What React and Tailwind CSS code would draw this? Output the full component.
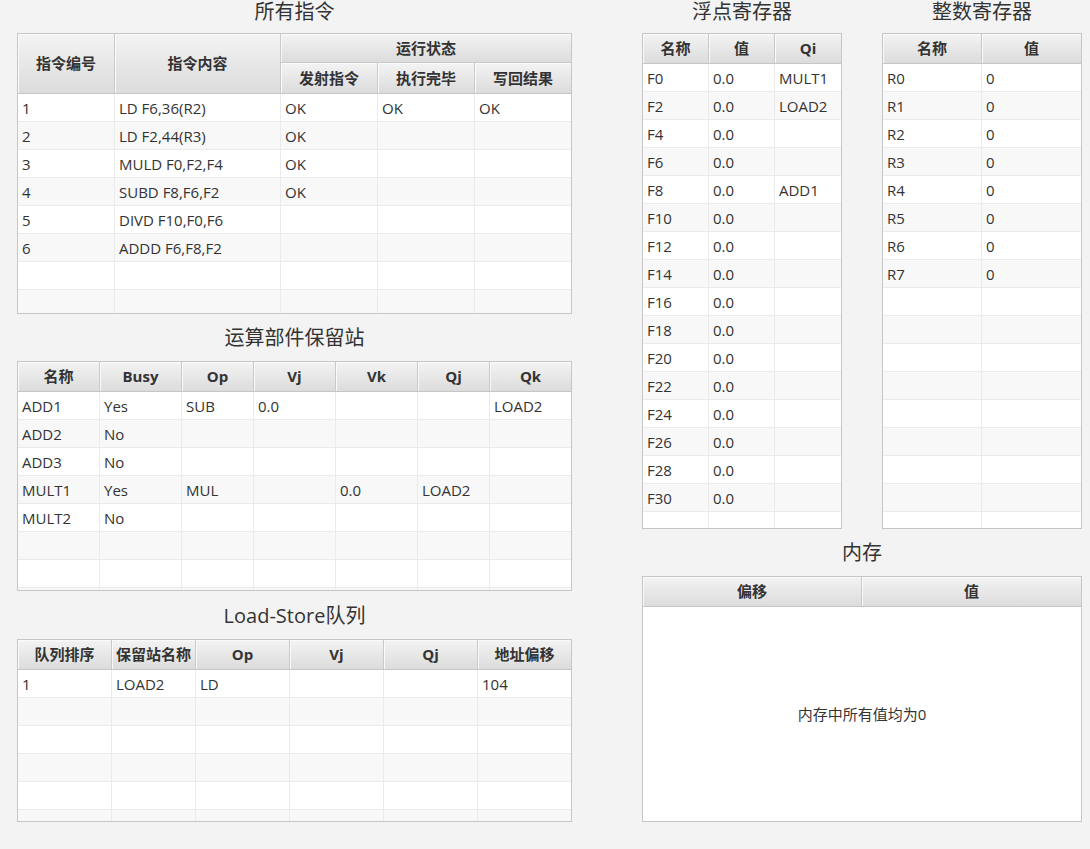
import React from "react";

const font = "font-['Open_Sans','Noto_Sans_CJK_SC',sans-serif]";

const headCell =
  "flex items-center justify-center font-bold text-[15px] text-[#333] bg-gradient-to-b from-[#f3f3f3] to-[#dcdcdc] border-r border-[#c9c9c9] shadow-[inset_1px_1px_0_#fafafa] last:border-r-0";

function Title({ children, className = "" }) {
  return (
    <div className={`flex items-center justify-center text-[20px] text-[#333] ${className}`}>
      {children}
    </div>
  );
}

function Body({ cols, rows, count, height }) {
  const filled = [...rows];
  while (filled.length < count) filled.push([]);
  return (
    <div className={`overflow-hidden bg-white ${height}`}>
      {filled.map((row, i) => (
        <div
          key={i}
          className={`flex h-[28px] border-b border-[#ebebeb] ${i % 2 ? "bg-[#f8f8f8]" : "bg-white"}`}
        >
          {cols.map((c, j) => (
            <div
              key={j}
              className={`${c} flex items-center pl-[4px] pt-[1px] text-[15px] text-[#333] border-r border-[#ebebeb] last:border-r-0 shrink-0`}
            >
              {row[j] || ""}
            </div>
          ))}
        </div>
      ))}
    </div>
  );
}

function SimpleTable({ heads, cols, rows, count, height, width }) {
  return (
    <div className={`border border-[#c6c6c6] bg-white ${width}`}>
      <div className="flex h-[30px] border-b border-[#c6c6c6]">
        {heads.map((h, i) => (
          <div key={h} className={`${cols[i]} ${headCell} shrink-0`}>
            {h}
          </div>
        ))}
      </div>
      <Body cols={cols} rows={rows} count={count} height={height} />
    </div>
  );
}

const instrCols = ["w-[97px]", "w-[166px]", "w-[97px]", "w-[97px]", "w-[96px]"];
const instrRows = [
  ["1", "LD F6,36(R2)", "OK", "OK", "OK"],
  ["2", "LD F2,44(R3)", "OK"],
  ["3", "MULD F0,F2,F4", "OK"],
  ["4", "SUBD F8,F6,F2", "OK"],
  ["5", "DIVD F10,F0,F6"],
  ["6", "ADDD F6,F8,F2"],
];

const rsCols = ["w-[82px]", "w-[82px]", "w-[72px]", "w-[82px]", "w-[82px]", "w-[72px]", "w-[81px]"];
const rsRows = [
  ["ADD1", "Yes", "SUB", "0.0", "", "", "LOAD2"],
  ["ADD2", "No"],
  ["ADD3", "No"],
  ["MULT1", "Yes", "MUL", "", "0.0", "LOAD2"],
  ["MULT2", "No"],
];

const lsCols = ["w-[94px]", "w-[84px]", "w-[94px]", "w-[94px]", "w-[94px]", "w-[93px]"];
const lsRows = [["1", "LOAD2", "LD", "", "", "104"]];

const fpRows = Array.from({ length: 16 }, (_, i) => [
  `F${i * 2}`,
  "0.0",
  { 0: "MULT1", 1: "LOAD2", 4: "ADD1" }[i] || "",
]);

const intRows = Array.from({ length: 8 }, (_, i) => [`R${i}`, "0"]);

export default function App() {
  return (
    <div className={`min-h-[849px] w-[1090px] bg-[#f3f3f3] ${font} flex gap-[70px] pl-[17px]`}>
      {/* left column */}
      <div className="flex flex-col w-[555px]">
        <Title className="h-[33px] pb-[9px]">所有指令</Title>
        <div className="border border-[#c6c6c6] bg-white">
          <div className="flex h-[60px] border-b border-[#c6c6c6]">
            <div className={`w-[97px] ${headCell} shrink-0`}>指令编号</div>
            <div className={`w-[166px] ${headCell} shrink-0`}>指令内容</div>
            <div className="flex flex-col w-[290px]">
              <div className={`h-[29px] ${headCell} !border-r-0 border-b`}>运行状态</div>
              <div className="flex h-[30px]">
                <div className={`w-[97px] ${headCell} shrink-0`}>发射指令</div>
                <div className={`w-[97px] ${headCell} shrink-0`}>执行完毕</div>
                <div className={`w-[96px] ${headCell} shrink-0`}>写回结果</div>
              </div>
            </div>
          </div>
          <Body cols={instrCols} rows={instrRows} count={8} height="h-[219px]" />
        </div>

        <Title className="h-[47px] pt-[1px]">运算部件保留站</Title>
        <SimpleTable heads={["名称", "Busy", "Op", "Vj", "Vk", "Qj", "Qk"]} cols={rsCols} rows={rsRows} count={8} height="h-[198px]" />

        <Title className="h-[48px] pt-[1px]">Load-Store队列</Title>
        <SimpleTable heads={["队列排序", "保留站名称", "Op", "Vj", "Qj", "地址偏移"]} cols={lsCols} rows={lsRows} count={6} height="h-[151px]" />
      </div>

      {/* right column */}
      <div className="flex flex-col w-[440px]">
        <div className="flex gap-[40px]">
          <div className="flex flex-col">
            <Title className="h-[33px] pb-[9px]">浮点寄存器</Title>
            <SimpleTable
              heads={["名称", "值", "Qi"]}
              cols={["w-[66px]", "w-[66px]", "w-[66px]"]}
              rows={fpRows}
              count={17}
              height="h-[464px]"
              width="w-[200px]"
            />
          </div>
          <div className="flex flex-col">
            <Title className="h-[33px] pb-[9px]">整数寄存器</Title>
            <SimpleTable
              heads={["名称", "值"]}
              cols={["w-[99px]", "w-[99px]"]}
              rows={intRows}
              count={17}
              height="h-[464px]"
              width="w-[200px]"
            />
          </div>
        </div>

        <Title className="h-[47px] pt-[1px]">内存</Title>
        <div className="border border-[#c6c6c6] bg-white w-[440px]">
          <div className="flex h-[30px] border-b border-[#c6c6c6]">
            <div className={`w-[219px] ${headCell} shrink-0`}>偏移</div>
            <div className={`w-[219px] ${headCell} shrink-0`}>值</div>
          </div>
          <div className="h-[214px] flex items-center justify-center text-[15px] text-[#333]">
            内存中所有值均为0
          </div>
        </div>
      </div>
    </div>
  );
}
